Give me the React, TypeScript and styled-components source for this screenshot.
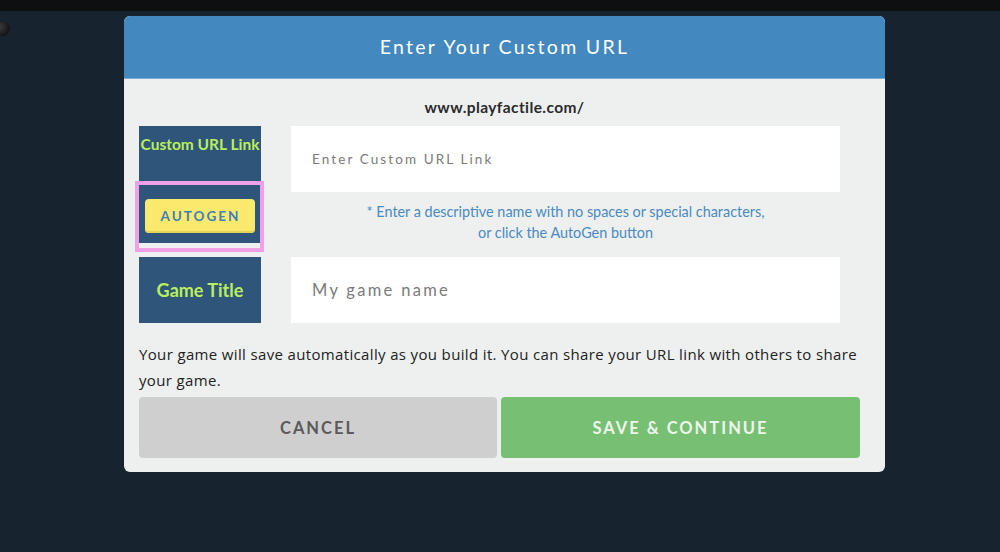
import React from 'react';
import styled, { createGlobalStyle } from 'styled-components';

const FONT = `'Lato', 'Open Sans', 'Liberation Sans', sans-serif`;
const TEXT_FONT = `'Open Sans', 'Lato', 'Liberation Sans', sans-serif`;

const GlobalStyle = createGlobalStyle`
    html, body {
        margin: 0;
        padding: 0;
        background: #172430;
        font-family: ${FONT};
    }
    * { box-sizing: border-box; }
`;

const Page = styled.div`
    position: relative;
    width: 1000px;
    height: 552px;
    overflow: hidden;
    background: #172430;
`;

const TopBar = styled.div`
    height: 11px;
    background: #0e0f10;
`;

const CornerBall = styled.div`
    position: absolute;
    left: -5px;
    top: 21px;
    width: 15px;
    height: 15px;
    border-radius: 50%;
    background: radial-gradient(circle at 35% 40%, #3a3a3a 0%, #141414 70%);
`;

const Modal = styled.div`
    width: 761px;
    margin: 5px 0 0 124px;
    border-radius: 6px;
    overflow: hidden;
    background: #eef0f0;
`;

const Header = styled.div`
    height: 63px;
    display: flex;
    align-items: center;
    justify-content: center;
    background: #4389bf;
    border-bottom: 1px solid #79acd6;
    color: #ffffff;
    font-size: 19.5px;
    letter-spacing: 2.3px;
    padding-bottom: 2px;
`;

const Body = styled.div`
    padding: 19px 25px 14px 15px;
    display: flex;
    flex-direction: column;
`;

const SiteUrl = styled.div`
    text-align: center;
    font-weight: 700;
    font-size: 15.5px;
    line-height: 18px;
    color: #2a2a2a;
    letter-spacing: 0.4px;
    padding-left: 10px;
    margin-bottom: 10px;
`;

const Form = styled.div`
    display: flex;
    gap: 30px;
`;

const LeftColumn = styled.div`
    width: 122px;
    display: flex;
    flex-direction: column;
`;

const RightColumn = styled.div`
    width: 549px;
    display: flex;
    flex-direction: column;
`;

const LabelBox = styled.div<{ $height: number; $size: number; $top?: number }>`
    height: ${(p) => p.$height}px;
    background: #30557a;
    color: #b9ef5c;
    font-weight: 700;
    font-size: ${(p) => p.$size}px;
    display: flex;
    justify-content: center;
    align-items: ${(p) => (p.$top !== undefined ? 'flex-start' : 'center')};
    padding-top: ${(p) => p.$top ?? 0}px;
    white-space: nowrap;
`;

const AutogenFrame = styled.div`
    height: 71px;
    margin: 0 -3px 5px -4px;
    border: 4px solid #f0a0e5;
    padding: 0 0 5px 0;
    background: #eef0f0;
`;

const AutogenInner = styled.div`
    height: 100%;
    background: #30557a;
    display: flex;
    align-items: center;
    justify-content: center;
    padding-top: 4px;
`;

const AutogenButton = styled.button`
    width: 110px;
    height: 34px;
    border: none;
    border-radius: 4px;
    background: #fae96c;
    box-shadow: inset 0 -2px 0 #e4d25a;
    color: #3f7fbd;
    font-family: ${FONT};
    font-weight: 700;
    font-size: 13.5px;
    letter-spacing: 2px;
    cursor: pointer;
    padding: 0 0 0 2px;
`;

const TextInput = styled.input<{ $size: number; $spacing: number }>`
    height: 66px;
    width: 100%;
    border: none;
    outline: none;
    background: #ffffff;
    padding: 0 21px;
    font-family: ${FONT};
    font-size: ${(p) => p.$size}px;
    letter-spacing: ${(p) => p.$spacing}px;
    color: #333;

    &::placeholder {
        color: #7b7b7b;
    }
`;

const Hint = styled.div`
    height: 65px;
    display: flex;
    flex-direction: column;
    align-items: center;
    justify-content: center;
    color: #4a8ac4;
    font-size: 14.4px;
    line-height: 21px;
    text-align: center;
    padding-bottom: 5px;
`;

const Note = styled.p`
    margin: 18px -12px 4px 0;
    font-family: ${TEXT_FONT};
    font-size: 15px;
    line-height: 26px;
    color: #222;
    letter-spacing: 0.35px;
`;

const Actions = styled.div`
    display: grid;
    grid-template-columns: 358px 359px;
    gap: 4px;
`;

const ActionButton = styled.button<{ $variant: 'cancel' | 'save' }>`
    height: 61px;
    border: none;
    border-radius: 4px;
    background: ${(p) => (p.$variant === 'save' ? '#77bf73' : '#cfcfcf')};
    color: ${(p) => (p.$variant === 'save' ? '#eef6ec' : '#5a5a5a')};
    font-family: ${FONT};
    font-weight: 700;
    font-size: 16.5px;
    letter-spacing: 2px;
    cursor: pointer;
`;

const App: React.FC = () => {
    return (
        <Page>
            <GlobalStyle />
            <TopBar />
            <CornerBall />
            <Modal>
                <Header>Enter Your Custom URL</Header>
                <Body>
                    <SiteUrl>www.playfactile.com/</SiteUrl>
                    <Form>
                        <LeftColumn>
                            <LabelBox $height={55} $size={15.5} $top={9}>
                                Custom URL Link
                            </LabelBox>
                            <AutogenFrame>
                                <AutogenInner>
                                    <AutogenButton>AUTOGEN</AutogenButton>
                                </AutogenInner>
                            </AutogenFrame>
                            <LabelBox $height={66} $size={18}>
                                Game Title
                            </LabelBox>
                        </LeftColumn>
                        <RightColumn>
                            <TextInput
                                $size={13.5}
                                $spacing={2.1}
                                placeholder="Enter Custom URL Link"
                            />
                            <Hint>
                                <span>
                                    * Enter a descriptive name with no spaces or
                                    special characters,
                                </span>
                                <span>or click the AutoGen button</span>
                            </Hint>
                            <TextInput
                                $size={16.5}
                                $spacing={2.3}
                                placeholder="My game name"
                            />
                        </RightColumn>
                    </Form>
                    <Note>
                        Your game will save automatically as you build it. You
                        can share your URL link with others to share your game.
                    </Note>
                    <Actions>
                        <ActionButton $variant="cancel">CANCEL</ActionButton>
                        <ActionButton $variant="save">
                            SAVE &amp; CONTINUE
                        </ActionButton>
                    </Actions>
                </Body>
            </Modal>
        </Page>
    );
};

export default App;
